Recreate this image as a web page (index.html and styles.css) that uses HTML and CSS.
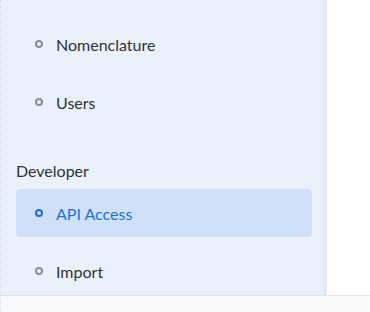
FILE: index.html
```html
<!DOCTYPE html>
<html>
<head>
    <link rel="stylesheet" href="styles.css">
</head>
<body>
    <div class="app">
        <div class="layout">
            <nav class="sidebar">
                <a class="nav-item"><span class="dot"></span>Nomenclature</a>
                <a class="nav-item"><span class="dot"></span>Users</a>
                <div class="nav-heading">Developer</div>
                <a class="nav-item active"><span class="dot"></span>API Access</a>
                <a class="nav-item"><span class="dot"></span>Import</a>
            </nav>
            <main class="content"></main>
        </div>
        <footer class="footer"></footer>
    </div>
</body>
</html>
```

FILE: styles.css
```css
body { margin: 0; font-family: 'Lato', 'Liberation Sans', sans-serif; background-color: #ffffff; }
.app { height: 312px; display: flex; flex-direction: column; border-left: 1px dotted #c6cfdd; overflow: hidden; }
.layout { display: flex; height: 295px; flex-shrink: 0; }
.sidebar { width: 326px; box-sizing: border-box; padding: 20px 15px 0 15px; background-color: #eaf1fb; box-shadow: inset -5px 0 5px -3px rgba(60, 80, 110, 0.08); }
.content { flex: 1; background-color: #ffffff; }
.nav-item { display: flex; align-items: center; height: 48px; margin-bottom: 10px; padding-left: 19px; border-radius: 5px; font-size: 16px; color: #2f3238; text-decoration: none; }
.nav-item .dot { width: 8px; height: 8px; box-sizing: border-box; border: 2px solid #8b8e94; border-radius: 50%; margin-right: 13px; }
.nav-item.active { background-color: #cfe0f8; color: #1c6fe3; }
.nav-item.active .dot { border-color: #1c6fe3; }
.nav-heading { margin: 35px 0 8px 0; font-size: 16px; line-height: 20px; color: #2f3238; }
.footer { flex: 1; background-color: #f8f9fb; border-top: 1px solid #e1e4e8; }
```
